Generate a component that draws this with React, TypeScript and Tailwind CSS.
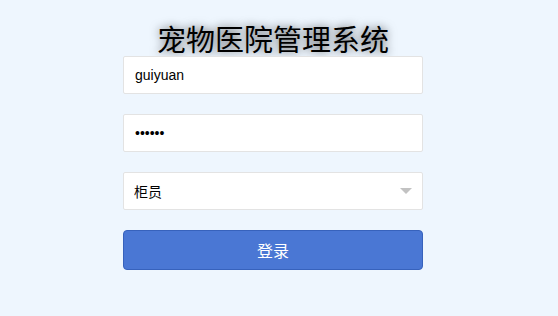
import { useState } from "react";

export default function App() {
  const [username, setUsername] = useState("guiyuan");
  const [password, setPassword] = useState("123456");
  const [role, setRole] = useState("柜员");

  return (
    <div
      className="min-h-screen w-full bg-[#eef6fe] flex justify-center pr-[12px]"
      style={{ fontFamily: '"Liberation Sans", Arial, "Noto Sans CJK SC", sans-serif' }}
    >
      <div className="w-[300px] pt-[23px]">
        {/* Title */}
        <h1
          className="text-center text-[29px] leading-[30px] text-black whitespace-nowrap [text-shadow:0_0_10px_rgba(0,0,0,0.65)]"
          style={{ fontFamily: '"Noto Sans CJK SC", sans-serif' }}
        >
          宠物医院管理系统
        </h1>

        <form className="mt-[3px] flex flex-col gap-[20px]" onSubmit={(e) => e.preventDefault()}>
          <input
            type="text"
            value={username}
            onChange={(e) => setUsername(e.target.value)}
            className="h-[38px] w-full rounded-[2px] border border-[#e3e3e3] bg-white px-[11px] text-[14px] text-black outline-none"
          />
          <input
            type="password"
            value={password}
            onChange={(e) => setPassword(e.target.value)}
            className="h-[38px] w-full rounded-[2px] border border-[#e3e3e3] bg-white px-[11px] text-[14px] text-black outline-none"
          />

          {/* Role select */}
          <div className="relative h-[38px] w-full">
            <select
              value={role}
              onChange={(e) => setRole(e.target.value)}
              className="h-full w-full appearance-none rounded-[2px] border border-[#e3e3e3] bg-white px-[10px] text-[14px] text-black outline-none"
              style={{ fontFamily: '"Noto Sans CJK SC", sans-serif' }}
            >
              <option>柜员</option>
              <option>医生</option>
              <option>管理员</option>
            </select>
            <span className="pointer-events-none absolute right-[11px] top-[16px] h-0 w-0 border-x-[6px] border-t-[6px] border-x-transparent border-t-[#c2c2c2]" />
          </div>

          <button
            type="submit"
            className="h-[40px] w-full rounded-[4px] border border-[#3762bc] bg-[#4a77d4] text-[16px] text-white"
            style={{ fontFamily: '"Noto Sans CJK SC", sans-serif' }}
          >
            登录
          </button>
        </form>
      </div>
    </div>
  );
}
